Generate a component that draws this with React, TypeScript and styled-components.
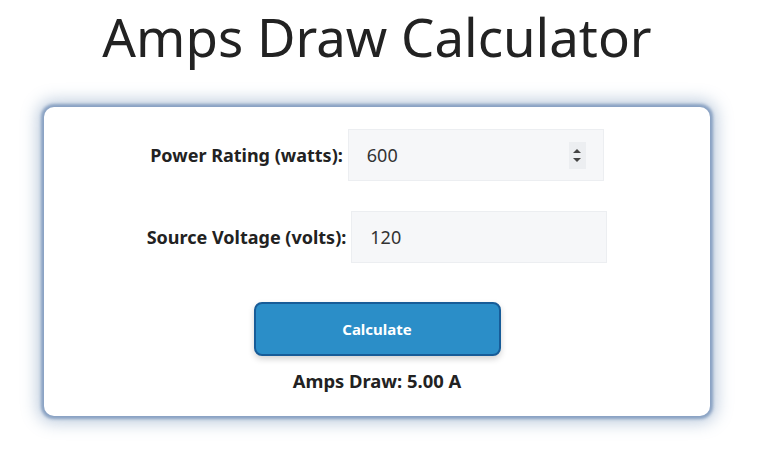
import React from "react";
import styled, { createGlobalStyle } from "styled-components";

const Global = createGlobalStyle`
  html, body { margin: 0; padding: 0; background: #ffffff; }
  body { font-family: "Noto Sans", "Open Sans", sans-serif; color: #222; }
`;

const Page = styled.div`
  width: 666px;
  margin-left: 44px;
  padding-bottom: 36px;
  display: flex;
  flex-direction: column;
  align-items: center;
`;

const Title = styled.h1`
  margin: 0;
  font-family: "Noto Sans", sans-serif;
  font-weight: 400;
  font-size: 52.8px;
  line-height: 73px;
  color: #222;
  white-space: nowrap;
`;

const Card = styled.div`
  box-sizing: border-box;
  margin-top: 34px;
  width: 666px;
  height: 309px;
  background: #fff;
  border-radius: 10px;
  box-shadow: 0 0 3px 3px rgba(125, 152, 188, 0.85), 0 0 16px 7px rgba(90, 125, 170, 0.38);
  padding-top: 22px;
  display: flex;
  flex-direction: column;
  align-items: center;
`;

const Row = styled.div<{ $mt?: number }>`
  display: flex;
  align-items: center;
  gap: 5px;
  margin-top: ${(p) => p.$mt ?? 0}px;
`;

const Label = styled.label`
  font-weight: 700;
  font-size: 18px;
  color: #222;
  white-space: nowrap;
`;

const InputWrap = styled.div`
  position: relative;
`;

const Input = styled.input`
  box-sizing: border-box;
  width: 256px;
  height: 52px;
  padding: 0 0 0 18px;
  font-family: "Noto Sans", sans-serif;
  font-size: 18px;
  color: #333;
  background: #f6f7f9;
  border: 1px solid #eceef1;
  border-radius: 0;
  outline: none;
`;

const Spinner = styled.div`
  position: absolute;
  right: 18px;
  top: 13px;
  width: 17px;
  height: 27px;
  background: #eceef1;
  display: flex;
  flex-direction: column;
  align-items: center;
  justify-content: center;
  gap: 5px;
`;

const Arrow = styled.div<{ $down?: boolean }>`
  width: 0;
  height: 0;
  border-left: 4px solid transparent;
  border-right: 4px solid transparent;
  ${(p) => (p.$down ? "border-top: 4px solid #444;" : "border-bottom: 4px solid #444;")}
`;

const Button = styled.button`
  box-sizing: border-box;
  margin-top: 39px;
  width: 247px;
  height: 54px;
  background: #2b8ec8;
  border: 2px solid #175c98;
  border-radius: 8px;
  color: #fff;
  font-family: "Noto Sans", sans-serif;
  font-weight: 700;
  font-size: 15px;
  box-shadow: 0 3px 6px rgba(0, 0, 0, 0.18);
`;

const Result = styled.p`
  margin: 12px 0 0;
  font-weight: 700;
  font-size: 18.4px;
  color: #222;
`;

export default function App() {
  return (
    <>
      <Global />
      <Page>
        <Title>Amps Draw Calculator</Title>
        <Card>
          <Row>
            <Label>Power Rating (watts):</Label>
            <InputWrap>
              <Input type="text" defaultValue="600" />
              <Spinner>
                <Arrow />
                <Arrow $down />
              </Spinner>
            </InputWrap>
          </Row>
          <Row $mt={30}>
            <Label>Source Voltage (volts):</Label>
            <InputWrap>
              <Input type="text" defaultValue="120" />
            </InputWrap>
          </Row>
          <Button>Calculate</Button>
          <Result>Amps Draw: 5.00 A</Result>
        </Card>
      </Page>
    </>
  );
}
